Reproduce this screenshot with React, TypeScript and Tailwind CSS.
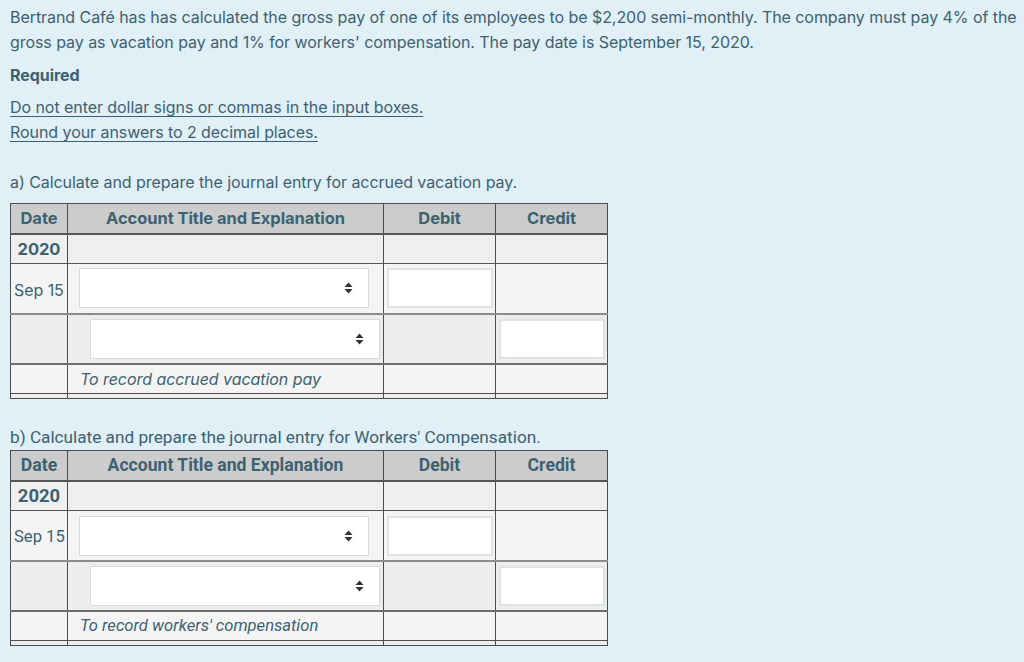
import React from 'react';

const Arrows = () => (
  <svg width="9" height="12" viewBox="0 0 9 12" className="shrink-0">
    <path d="M4.5 0.5 L8.5 5 L0.5 5 Z" fill="#333" />
    <path d="M4.5 11.5 L8.5 7 L0.5 7 Z" fill="#333" />
  </svg>
);

const Select = ({ indent }: { indent?: boolean }) => (
  <div
    className={
      'h-[40px] w-[290px] bg-white border border-[#d6dbde] flex items-center justify-end pr-[15px] ' +
      (indent ? 'ml-[22px]' : 'ml-[11px]')
    }
  >
    <Arrows />
  </div>
);

const NumInput = () => (
  <div className="h-[40px] w-[106px] mx-auto bg-white border-2 border-[#dde2e6]" />
);

interface TableProps {
  note: string;
  font: string;
  head: string;
  year: string;
  body: string;
}

const JournalTable: React.FC<TableProps> = ({ note, font, head, year, body }) => {
  const cell = 'border-l border-r border-[#4d4d4d] p-0';
  return (
    <table className={'ml-[10px] border-collapse border border-[#4d4d4d] text-[#3c6272] ' + font}>
      <colgroup>
        <col className="w-[57px]" />
        <col className="w-[316px]" />
        <col className="w-[112px]" />
        <col className="w-[112px]" />
      </colgroup>
      <thead>
        <tr className={'h-[30px] bg-[#cccccc] border-b-2 border-[#555] font-bold ' + head}>
          <th className={cell}>Date</th>
          <th className={cell}>Account Title and Explanation</th>
          <th className={cell}>Debit</th>
          <th className={cell}>Credit</th>
        </tr>
      </thead>
      <tbody>
        <tr className="h-[30px] bg-[#efefef] border-b border-[#555]">
          <td className={cell + ' text-center font-bold pt-[1px] ' + year}>2020</td>
          <td className={cell}></td>
          <td className={cell}></td>
          <td className={cell}></td>
        </tr>
        <tr className="h-[50px] bg-[#f4f4f4] border-b-2 border-[#8c8c8c]">
          <td className={cell + ' pl-[3px] pt-[3px] ' + body}>Sep 15</td>
          <td className={cell}>
            <Select />
          </td>
          <td className={cell}>
            <NumInput />
          </td>
          <td className={cell}></td>
        </tr>
        <tr className="h-[50px] bg-[#ededed] border-b-2 border-[#6e6e6e]">
          <td className={cell}></td>
          <td className={cell}>
            <Select indent />
          </td>
          <td className={cell}></td>
          <td className={cell}>
            <NumInput />
          </td>
        </tr>
        <tr className="h-[30px] bg-[#f4f4f4] border-b border-[#4d4d4d]">
          <td className={cell}></td>
          <td className={cell + ' italic pl-[12px] ' + body}>{note}</td>
          <td className={cell}></td>
          <td className={cell}></td>
        </tr>
        <tr className="h-[5px] bg-[#eeeeee]">
          <td className={cell}></td>
          <td className={cell}></td>
          <td className={cell}></td>
          <td className={cell}></td>
        </tr>
      </tbody>
    </table>
  );
};

export default function App() {
  return (
    <div className="w-[1024px] h-[662px] overflow-hidden bg-[#e1eff7] text-[#3c6272] font-['Inter',sans-serif] tracking-[-0.06px]">
      <div className="pl-[10px] pr-0 pt-[5px] text-[16px] leading-[25px]">
        <p>
          Bertrand Café has has calculated the gross pay of one of its employees to be $2,200 semi-monthly. The company
          must pay 4% of the gross pay as vacation pay and 1% for workers' compensation. The pay date is September 15,
          2020.
        </p>
        <p className="font-bold mt-[8px]">Required</p>
        <p className="mt-[7px] underline underline-offset-[3px]">Do not enter dollar signs or commas in the input boxes.</p>
        <p className="underline underline-offset-[3px]">Round your answers to 2 decimal places.</p>
        <p className="mt-[25px]">a) Calculate and prepare the journal entry for accrued vacation pay.</p>
      </div>
      <div className="mt-[8px]">
        <JournalTable
          note="To record accrued vacation pay"
          font="font-['Inter',sans-serif]"
          head="text-[16.5px]"
          year="text-[16.5px]"
          body="text-[16px]"
        />
      </div>
      <p className="px-[10px] mt-[26px] text-[17.2px] leading-[25px] tracking-normal font-['Roboto',sans-serif]">
        b) Calculate and prepare the journal entry for Workers' Compensation.
      </p>
      <div>
        <JournalTable
          note="To record workers' compensation"
          font="font-['Roboto',sans-serif] tracking-normal"
          head="text-[17.6px]"
          year="text-[18.5px]"
          body="text-[16.6px]"
        />
      </div>
    </div>
  );
}
